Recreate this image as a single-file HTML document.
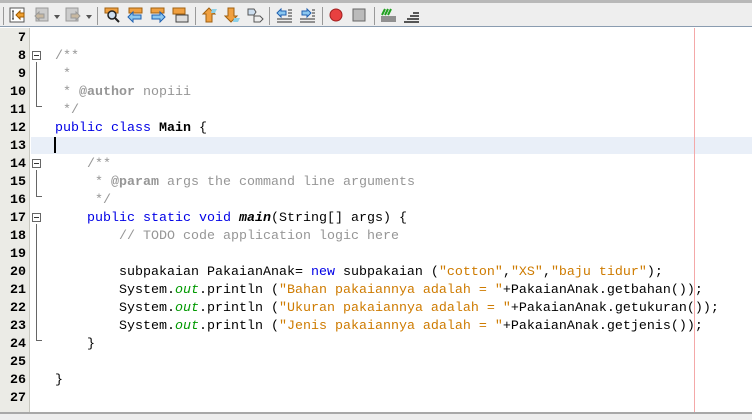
<!DOCTYPE html>
<html><head><meta charset="utf-8"><style>
*{margin:0;padding:0;box-sizing:border-box}
body{width:752px;height:420px;overflow:hidden;background:#fff;position:relative;font-family:"Liberation Mono",monospace}
#tabs{position:absolute;left:0;top:0;width:752px;height:3px;background:#b8b8b8}
#tb{position:absolute;left:0;top:3px;width:752px;height:24px;background:#eeeeee;border-bottom:1px solid #8a9cb0}
.ic{position:absolute;top:4px;width:17px;height:16px}
.sep{position:absolute;top:4px;width:1px;height:18px;background:#999}
#gut{position:absolute;left:0;top:28px;width:30px;height:385px;background:#ebebe6;border-right:1px solid #c8c8c0}
.ln{position:absolute;left:0;width:26px;text-align:right;font-size:13.33px;line-height:18px;color:#000;font-weight:bold}
.code{position:absolute;left:55px;font-size:13.33px;line-height:18px;white-space:pre;color:#000}
.k{color:#0000e6}.c{color:#969696}.s{color:#ce7b00}.o{color:#009900;font-style:italic}.b{font-weight:bold}
.fold{position:absolute;left:32px;width:9px;height:9px;border:1px solid #666;background:#fff}
.fold:after{content:"";position:absolute;left:1px;top:3px;width:5px;height:1px;background:#333}
.vl{position:absolute;left:36px;width:1px;background:#666}
.hl{position:absolute;left:36px;width:6px;height:1px;background:#666}
#bot{position:absolute;left:0;top:412px;width:752px;height:8px;background:#eeeeee;border-top:2px solid #a8a8a8}
</style></head><body>
<div id="tabs"></div>
<div id="tb">
<div class="sep" style="left:3px"></div>
<svg class="ic" style="left:9px" viewBox="0 0 17 16"><rect x="1" y="1" width="14" height="14" fill="#fff" stroke="#555"/><path d="M4 4v8M3 4h2M3 12h2" stroke="#333"/><path d="M7 8l4-4v2h4v4h-4v2z" fill="#f0a030" stroke="#a05a00"/></svg>
<svg class="ic" style="left:33px" viewBox="0 0 17 16"><rect x="3" y="1" width="12" height="13" fill="#ccc" stroke="#999"/><path d="M2 9l4-4v2h5v4H6v2z" fill="#c8b8a0" stroke="#999"/></svg>
<div style="position:absolute;left:54px;top:12px;border:3px solid transparent;border-top:4px solid #555"></div>
<svg class="ic" style="left:65px" viewBox="0 0 17 16"><rect x="1" y="1" width="12" height="13" fill="#ccc" stroke="#999"/><path d="M15 9l-4-4v2H6v4h5v2z" fill="#c8b8a0" stroke="#999"/></svg>
<div style="position:absolute;left:86px;top:12px;border:3px solid transparent;border-top:4px solid #555"></div>
<div class="sep" style="left:97px"></div>
<svg class="ic" style="left:104px" viewBox="0 0 17 16"><rect x="1" y="1" width="13" height="5" fill="#f0a040" stroke="#a06010"/><circle cx="8" cy="8" r="4" fill="#cde" stroke="#222" stroke-width="1.5"/><path d="M11 11l4 4" stroke="#222" stroke-width="2"/></svg>
<svg class="ic" style="left:127px" viewBox="0 0 17 16"><rect x="2" y="1" width="13" height="5" fill="#f0a040" stroke="#a06010"/><path d="M1 10l5-5v3h8v4H6v3z" fill="#8cc8f0" stroke="#2060b0"/></svg>
<svg class="ic" style="left:149px" viewBox="0 0 17 16"><rect x="2" y="1" width="13" height="5" fill="#f0a040" stroke="#a06010"/><path d="M16 10l-5-5v3H3v4h8v3z" fill="#8cc8f0" stroke="#2060b0"/></svg>
<svg class="ic" style="left:172px" viewBox="0 0 17 16"><rect x="1" y="1" width="12" height="6" fill="#f0a040" stroke="#a06010"/><rect x="4" y="8" width="12" height="7" fill="#ddd" stroke="#444"/></svg>
<div class="sep" style="left:195px"></div>
<svg class="ic" style="left:201px" viewBox="0 0 17 16"><path d="M8 1l6 6h-3v8H5V7H2z" fill="#f0a040" stroke="#a06010"/><path d="M11 2h5l-2 4h-4z" fill="#8cd0e8"/></svg>
<svg class="ic" style="left:224px" viewBox="0 0 17 16"><path d="M7 15l6-6h-3V1H4v8H1z" fill="#f0a040" stroke="#a06010"/><path d="M10 11h6l-2 4h-5z" fill="#8cd0e8"/></svg>
<svg class="ic" style="left:247px" viewBox="0 0 17 16"><path d="M1 2h6l2 3-2 3H1z" fill="#cde" stroke="#555"/><path d="M7 9h6l3 3-3 3H7z" fill="#eee" stroke="#555"/></svg>
<div class="sep" style="left:269px"></div>
<svg class="ic" style="left:276px" viewBox="0 0 17 16"><path d="M1 6l4-4v2h5v4H5v2z" fill="#8cc8f0" stroke="#2060b0"/><path d="M12 3h4M12 6h4M12 9h4M1 12h15M1 15h15" stroke="#333"/></svg>
<svg class="ic" style="left:299px" viewBox="0 0 17 16"><path d="M12 6L8 2v2H3v4h5v2z" fill="#8cc8f0" stroke="#2060b0"/><path d="M13 3h3M13 6h3M13 9h3M1 12h15M1 15h15" stroke="#333"/></svg>
<div class="sep" style="left:322px"></div>
<svg class="ic" style="left:328px" viewBox="0 0 17 16"><circle cx="8" cy="8" r="6" fill="#e84040" stroke="#a02020"/></svg>
<svg class="ic" style="left:351px" viewBox="0 0 17 16"><rect x="2" y="2" width="12" height="12" fill="#bbb" stroke="#666"/></svg>
<div class="sep" style="left:374px"></div>
<svg class="ic" style="left:380px" viewBox="0 0 17 16"><path d="M2 8l3-6M5 8l3-6M8 8l3-6" stroke="#20a020" stroke-width="2"/><path d="M1 10h15M1 12h15M1 14h15" stroke="#333"/></svg>
<svg class="ic" style="left:403px" viewBox="0 0 17 16"><path d="M10 6h6M7 9h9M4 12h12M1 15h15" stroke="#222" stroke-width="1.5"/></svg>
</div>
<div id="gut"></div>
<div style="position:absolute;left:31px;top:137px;width:721px;height:17px;background:#e9eff8"></div>
<div style="position:absolute;left:54px;top:137px;width:2px;height:16px;background:#000"></div>
<div style="position:absolute;left:694px;top:28px;width:1px;height:385px;background:#f4a8a8"></div>
<div id="lines">
<div class="ln" style="top:30px">7</div><div class="ln" style="top:48px">8</div><div class="ln" style="top:66px">9</div><div class="ln" style="top:84px">10</div><div class="ln" style="top:102px">11</div><div class="ln" style="top:120px">12</div><div class="ln" style="top:138px">13</div><div class="ln" style="top:156px">14</div><div class="ln" style="top:174px">15</div><div class="ln" style="top:192px">16</div><div class="ln" style="top:210px">17</div><div class="ln" style="top:228px">18</div><div class="ln" style="top:246px">19</div><div class="ln" style="top:264px">20</div><div class="ln" style="top:282px">21</div><div class="ln" style="top:300px">22</div><div class="ln" style="top:318px">23</div><div class="ln" style="top:336px">24</div><div class="ln" style="top:354px">25</div><div class="ln" style="top:372px">26</div><div class="ln" style="top:390px">27</div>
</div>
<div class="fold" style="top:51px"></div><div class="vl" style="top:62px;height:44px"></div><div class="hl" style="top:106px"></div>
<div class="fold" style="top:159px"></div><div class="vl" style="top:170px;height:26px"></div><div class="hl" style="top:196px"></div>
<div class="fold" style="top:213px"></div><div class="vl" style="top:224px;height:116px"></div><div class="hl" style="top:340px"></div>
<div class="code" style="top:48px"><span class="c">/**
 *
 * <b>@author</b> nopiii
 */</span>
<span class="k">public class</span> <b>Main</b> {

    <span class="c">/**
     * <b>@param</b> args the command line arguments
     */</span>
    <span class="k">public static void</span> <b><i>main</i></b>(String[] args) {
        <span class="c">// TODO code application logic here</span>

        subpakaian PakaianAnak= <span class="k">new</span> subpakaian (<span class="s">"cotton"</span>,<span class="s">"XS"</span>,<span class="s">"baju tidur"</span>);
        System.<span class="o">out</span>.println (<span class="s">"Bahan pakaiannya adalah = "</span>+PakaianAnak.getbahan());
        System.<span class="o">out</span>.println (<span class="s">"Ukuran pakaiannya adalah = "</span>+PakaianAnak.getukuran());
        System.<span class="o">out</span>.println (<span class="s">"Jenis pakaiannya adalah = "</span>+PakaianAnak.getjenis());
    }

}</div>
<div id="bot"></div>
</body></html>
